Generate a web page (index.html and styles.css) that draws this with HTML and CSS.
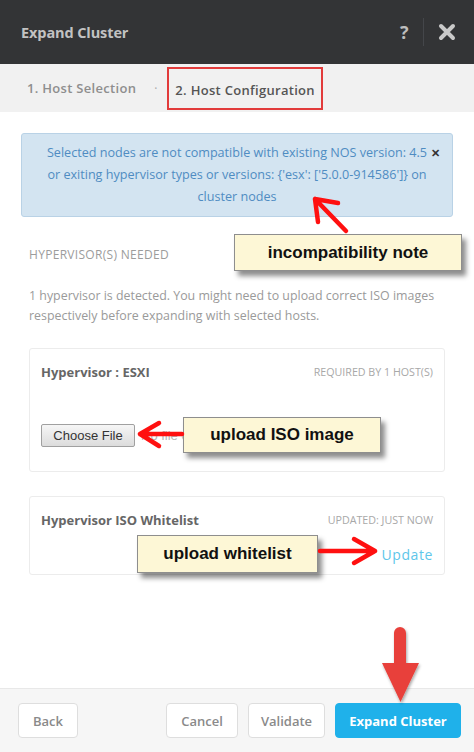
FILE: index.html
```html
<!DOCTYPE html>
<html lang="en">
<head>
	<meta charset="UTF-8">
	<title>Expand Cluster</title>
	<link rel="stylesheet" href="styles.css">
</head>
<body>
	<div class="dialog">
		<div class="head">
			<div class="head-title">Expand Cluster</div>
			<div class="head-tools">
				<span class="help">?</span>
				<span class="sep"></span>
				<svg class="close" width="18" height="18" viewBox="0 0 18 18"><path d="M3 3L15 15M15 3L3 15" stroke="#c9c9c9" stroke-width="4" stroke-linecap="round"/></svg>
			</div>
		</div>
		<div class="tabs">
			<span class="tab">1. Host Selection</span>
			<span class="dot">&middot;</span>
			<span class="tab tab-on">2. Host Configuration</span>
		</div>
		<div class="content">
			<div class="alert">
				<p>Selected nodes are not compatible with existing NOS version: 4.5<br>or exiting hypervisor types or versions: {'esx': ['5.0.0-914586']} on<br>cluster nodes</p>
				<span class="alert-x">&#x2715;</span>
			</div>
			<div class="section">
				<div class="label">HYPERVISOR(S) NEEDED</div>
				<p class="desc">1 hypervisor is detected. You might need to upload correct ISO images respectively before expanding with selected hosts.</p>
				<div class="card card-iso">
					<div class="card-row">
						<span class="card-title">Hypervisor : ESXI</span>
						<span class="card-meta">REQUIRED BY 1 HOST(S)</span>
					</div>
					<div class="file-row">
						<button class="file-btn">Choose File</button>
						<span class="file-name">No file chosen</span>
					</div>
				</div>
				<div class="card card-wl">
					<div class="card-row">
						<span class="card-title">Hypervisor ISO Whitelist</span>
						<span class="card-meta">UPDATED: JUST NOW</span>
					</div>
					<div class="link-row"><a class="link">Update</a></div>
				</div>
			</div>
		</div>
		<div class="foot">
			<button class="btn">Back</button>
			<div class="foot-right">
				<button class="btn btn-cancel">Cancel</button>
				<button class="btn btn-validate">Validate</button>
				<button class="btn btn-primary">Expand Cluster</button>
			</div>
		</div>
	</div>

	<div class="note note-1">incompatibility note</div>
	<div class="note note-2">upload ISO image</div>
	<div class="note note-3">upload whitelist</div>

	<svg class="arrows" width="474" height="752" viewBox="0 0 474 752">
		<defs>
			<filter id="sh" x="-20%" y="-20%" width="140%" height="140%">
				<feDropShadow dx="1" dy="2" stdDeviation="1.5" flood-color="#000" flood-opacity="0.35"/>
			</filter>
		</defs>
		<g stroke="#ff1010" stroke-width="4.5" stroke-linecap="round" stroke-linejoin="round" fill="none">
			<path d="M346 231L315 199M315 199L338 203M315 199L318 222"/>
			<path d="M182 434L140 434M140 434L159 423M140 434L159 446"/>
			<path d="M320 551L375 551M375 551L354 539M375 551L354 563"/>
		</g>
		<g filter="url(#sh)" fill="#e8403a">
			<path d="M394 633a6 6 0 0 1 12 0V663H419L400.5 702L382 663H394Z"/>
		</g>
	</svg>
</body>
</html>
```

FILE: styles.css
```css
body{margin: 0;font-family: "Open Sans", "Liberation Sans", sans-serif;background: #fff;}
.dialog{width: 474px;height: 752px;display: flex;flex-direction: column;}

.head{height: 64px;background: #333436;display: flex;align-items: center;justify-content: space-between;padding: 0 18px 0 21px;box-sizing: border-box;flex: none;}
.head-title{color: #c2c2c2;font-size: 14.5px;font-weight: 700;letter-spacing: -0.1px;}
.head-tools{display: flex;align-items: center;}
.help{color: #bdbdbd;font-size: 18px;font-weight: 700;width: 12px;}
.sep{width: 1px;height: 28px;background: #44464a;margin: 0 14px 0 11px;}
.close{display: block;}

.tabs{height: 48px;background: #f1f1f1;display: flex;align-items: center;padding-left: 27px;box-sizing: border-box;flex: none;}
.tab{font-size: 13px;color: #8e8e8e;font-weight: 600;letter-spacing: 0.3px;}
.dot{color: #aaa;font-size: 12px;margin: 0 10px 0 18px;}
.tab-on{color: #555;height: 43px;line-height: 43px;border: 2px solid #e23b3b;box-sizing: border-box;padding: 0 6px;margin-top: 1px;}

.content{flex: 1;padding: 21px 21px 0;}
.alert{position: relative;height: 84px;background: #d3e4f1;border: 1px solid #b9d2e6;border-radius: 3px;box-sizing: border-box;}
.alert p{margin: 0;padding-top: 8px;text-align: center;font-size: 12.6px;line-height: 22px;color: #4f8cc2;}
.alert-x{position: absolute;right: 12px;top: 11px;font-size: 11px;font-weight: 700;color: #333;}

.section{padding: 0 8px;}
.label{margin-top: 30px;font-size: 12px;color: #9c9c9c;line-height: 16px;letter-spacing: 0.3px;}
.desc{margin: 23px 0 0;font-size: 12.4px;line-height: 20px;color: #9a9a9a;}

.card{border: 1px solid #ececec;border-radius: 3px;padding: 13px 11px 0 11px;box-sizing: border-box;}
.card-iso{margin-top: 22px;height: 124px;}
.card-wl{margin-top: 24px;height: 79px;}
.card-row{display: flex;justify-content: space-between;align-items: center;height: 20px;}
.card-title{font-size: 13px;font-weight: 700;color: #666;}
.card-meta{font-size: 10.7px;color: #a8a8a8;}

.file-row{margin-top: 42px;display: flex;align-items: center;}
.file-btn{font-family: "Liberation Sans", Arial, sans-serif;font-size: 13px;color: #333;height: 23px;width: 94px;padding: 0;border: 1px solid #a0a0a0;border-radius: 2px;background: linear-gradient(#f6f6f6, #dcdcdc);}
.file-name{font-family: "Liberation Sans", Arial, sans-serif;font-size: 13px;color: #b5b5b5;margin-left: 6px;}

.link-row{text-align: right;margin-top: 13px;}
.link{font-size: 14px;letter-spacing: 0.6px;color: #5ec6ea;}

.foot{height: 64px;flex: none;background: #f6f6f6;border-top: 1px solid #e8e8e8;box-sizing: border-box;display: flex;justify-content: space-between;align-items: flex-start;padding: 14px 13px 0 18px;}
.foot-right{display: flex;gap: 10px;}
.btn{height: 35px;background: #fff;border: 1px solid #dedede;border-radius: 4px;font-family: "Open Sans", "Liberation Sans", sans-serif;font-size: 13px;font-weight: 600;color: #8a8a8a;width: 60px;padding: 0;}
.btn-cancel{width: 72px;}
.btn-validate{width: 77px;}
.btn-primary{width: 126px;background: #1fb1ea;border-color: #1fb1ea;color: #fff;font-weight: 700;}

.note{position: absolute;background: #fdf7d6;border: 1px solid #8e8e8e;box-shadow: 4px 5px 5px rgba(0,0,0,0.45);font-family: "Liberation Sans", Arial, sans-serif;font-weight: 700;font-size: 17px;color: #111;display: flex;align-items: center;justify-content: center;box-sizing: border-box;}
.note-1{left: 234px;top: 234px;width: 228px;height: 37px;}
.note-2{left: 183px;top: 417px;width: 198px;height: 36px;}
.note-3{left: 137px;top: 535px;width: 181px;height: 38px;}
.arrows{position: absolute;left: 0;top: 0;pointer-events: none;}
```
